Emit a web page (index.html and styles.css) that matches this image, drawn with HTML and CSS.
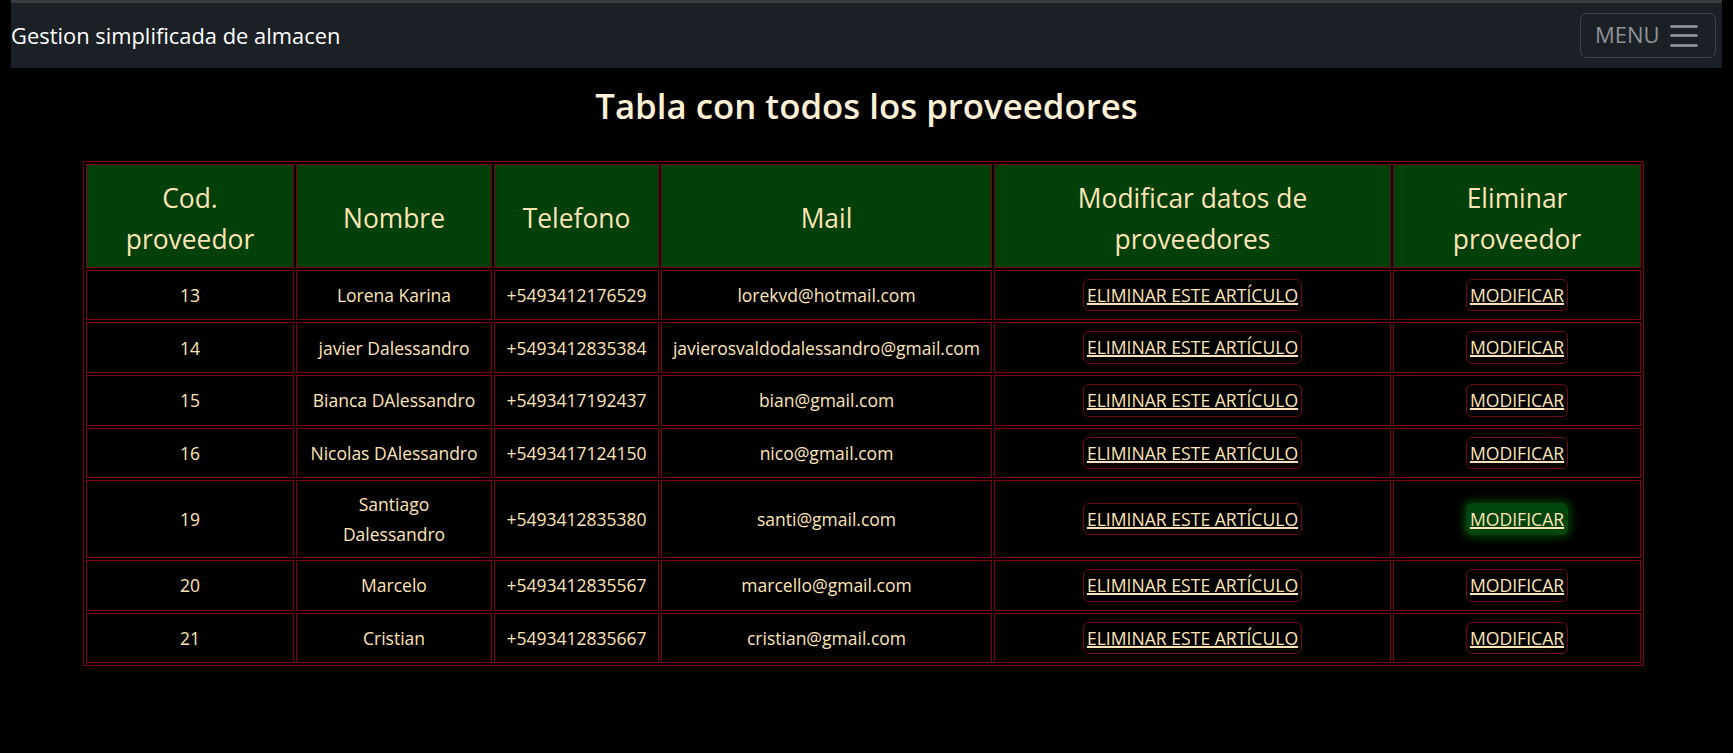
FILE: index.html
```html
<!DOCTYPE html>
<html lang="es">
<head>
<meta charset="utf-8">
<title>Proveedores</title>
<link rel="stylesheet" href="styles.css">
</head>
<body>
<nav class="navbar">
  <span class="brand">Gestion simplificada de almacen</span>
  <button class="menu-btn" type="button">
    <span class="menu-label">MENU</span>
    <svg class="burger" width="28" height="24" viewBox="0 0 28 24" aria-hidden="true">
      <path d="M1.5 2.5H26.5M1.5 11.5H26.5M1.5 21.5H26.5" stroke="#9a9da1" stroke-width="2.6" stroke-linecap="round" fill="none"/>
    </svg>
  </button>
</nav>
<main class="content">
  <h1 class="title">Tabla con todos los proveedores</h1>
  <table class="prov-table">
    <thead>
      <tr>
        <th class="col-cod">Cod. proveedor</th>
        <th class="col-nom">Nombre</th>
        <th class="col-tel">Telefono</th>
        <th class="col-mail">Mail</th>
        <th class="col-mod">Modificar datos de proveedores</th>
        <th class="col-del">Eliminar proveedor</th>
      </tr>
    </thead>
    <tbody>
      <tr>
        <td>13</td><td class="name">Lorena Karina</td><td>+5493412176529</td><td>lorekvd@hotmail.com</td>
        <td><a class="btn" href="#">ELIMINAR ESTE ARTÍCULO</a></td><td><a class="btn" href="#">MODIFICAR</a></td>
      </tr>
      <tr>
        <td>14</td><td class="name">javier Dalessandro</td><td>+5493412835384</td><td>javierosvaldodalessandro@gmail.com</td>
        <td><a class="btn" href="#">ELIMINAR ESTE ARTÍCULO</a></td><td><a class="btn" href="#">MODIFICAR</a></td>
      </tr>
      <tr>
        <td>15</td><td class="name">Bianca DAlessandro</td><td>+5493417192437</td><td>bian@gmail.com</td>
        <td><a class="btn" href="#">ELIMINAR ESTE ARTÍCULO</a></td><td><a class="btn" href="#">MODIFICAR</a></td>
      </tr>
      <tr>
        <td>16</td><td class="name">Nicolas DAlessandro</td><td>+5493417124150</td><td>nico@gmail.com</td>
        <td><a class="btn" href="#">ELIMINAR ESTE ARTÍCULO</a></td><td><a class="btn" href="#">MODIFICAR</a></td>
      </tr>
      <tr>
        <td>19</td><td class="name">Santiago Dalessandro</td><td>+5493412835380</td><td>santi@gmail.com</td>
        <td><a class="btn" href="#">ELIMINAR ESTE ARTÍCULO</a></td><td><a class="btn glow" href="#">MODIFICAR</a></td>
      </tr>
      <tr>
        <td>20</td><td class="name">Marcelo</td><td>+5493412835567</td><td>marcello@gmail.com</td>
        <td><a class="btn" href="#">ELIMINAR ESTE ARTÍCULO</a></td><td><a class="btn" href="#">MODIFICAR</a></td>
      </tr>
      <tr>
        <td>21</td><td class="name">Cristian</td><td>+5493412835667</td><td>cristian@gmail.com</td>
        <td><a class="btn" href="#">ELIMINAR ESTE ARTÍCULO</a></td><td><a class="btn" href="#">MODIFICAR</a></td>
      </tr>
    </tbody>
  </table>
</main>
</body>
</html>
```
FILE: styles.css
```css
* {
  box-sizing: border-box;
}

html,
body {
  margin: 0;
  background: #000;
}

body {
  font-family: "Open Sans", "Noto Sans", sans-serif;
  color: #ffe4b5;
}

.navbar {
  display: flex;
  align-items: center;
  justify-content: space-between;
  height: 68px;
  margin: 0 11px;
  padding-right: 6px;
  border-top: 3px solid #3a3d40;
  background: #1b2026;
}

.brand {
  color: #fff;
  font-size: 21.9px;
  line-height: 1.362;
}

.menu-btn {
  display: flex;
  align-items: center;
  gap: 10px;
  width: 136px;
  height: 45px;
  padding: 0 0 0 14px;
  border: 1px solid #3b4046;
  border-radius: 7px;
  background: transparent;
  color: #8e9296;
  font-family: inherit;
  font-size: 22px;
}

.menu-label {
  line-height: 1;
  padding-bottom: 4px;
}

.burger {
  display: block;
  flex: none;
}

.title {
  margin: 17px 0 34px;
  text-align: center;
  font-size: 34.8px;
  font-weight: 600;
  line-height: 1.2;
  color: #fff0d6;
}

.prov-table {
  margin-left: 83px;
  width: 1561px;
  table-layout: fixed;
  border-collapse: separate;
  border-spacing: 2px;
  border: 1px solid #80000f;
}

.prov-table th,
.prov-table td {
  border: 1px solid #80000f;
  text-align: center;
  vertical-align: middle;
}

.prov-table th {
  height: 104px;
  padding: 6px 14px 0;
  background: #014009;
  font-weight: 400;
  font-size: 26.4px;
  line-height: 41px;
}

.col-cod { width: 208px; }
.col-nom { width: 196px; }
.col-tel { width: 165px; }
.col-mail { width: 331px; }
.col-mod { width: 397px; }
.col-del { width: 248px; }

.prov-table td {
  padding: 8px;
  font-size: 17.5px;
  line-height: 30px;
}

.prov-table td.name {
  padding: 8px 10.5px;
}

.btn {
  display: block;
  width: max-content;
  margin: 0 auto;
  padding: 2px 3px;
  border: 1.5px solid #700a12;
  border-radius: 6px;
  color: #ffe4b5;
  font-size: 17.6px;
  line-height: 26.6px;
  text-decoration: underline;
  text-decoration-thickness: 1.5px;
}

.btn.glow {
  background: #00450b;
  border-color: #00450b;
  box-shadow: 0 0 8px 3px rgba(0, 110, 10, 0.55);
}
```
